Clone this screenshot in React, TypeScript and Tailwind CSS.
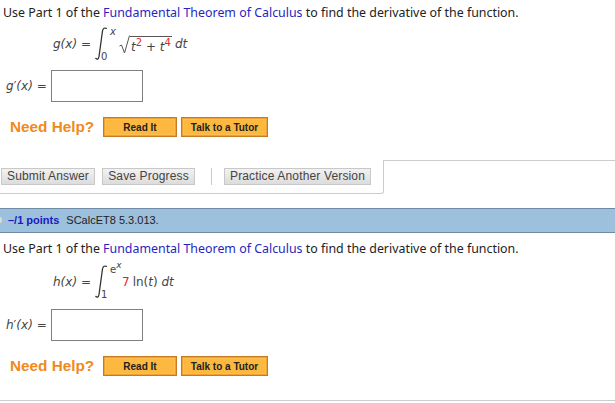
const Integral = () => (
  <svg width="16" height="34" viewBox="0 0 16 34" className="shrink-0" fill="none">
    <path d="M0.5 31 C2 33 3.5 32.5 4 29.5 L7.5 4 C8 1 9.5 0.5 12 1.5" stroke="#333" strokeWidth="1.3" />
  </svg>
);

const Sqrt = () => (
  <svg width="11" height="19" viewBox="0 0 11 19" className="shrink-0" fill="none">
    <path d="M0.5 11 L2.5 10 L5.5 18 L10.5 0.5" stroke="#555" strokeWidth="1" />
  </svg>
);

const Prompt = () => (
  <p className="text-[12.4px] leading-[16px] text-[#222]">
    Use Part 1 of the <span className="text-[#2a1fc0]">Fundamental Theorem of Calculus</span> to find the derivative of the function.
  </p>
);

const Help = () => (
  <div className="flex items-center pl-[10px]">
    <span className="w-[93px] text-[15.3px] font-bold text-[#f08a1d] font-['Liberation_Sans',sans-serif]">Need Help?</span>
    <button className="flex h-[20px] w-[74px] items-center justify-center border border-[#c77a20] bg-[#fdb93f] shadow-[inset_0_0_0_1px_#f0a030,inset_0_0_0_2px_#fdc050] text-[10px] font-bold text-[#222] font-['Liberation_Sans',sans-serif]">
      Read It
    </button>
    <button className="ml-[4px] flex h-[20px] w-[87px] items-center justify-center border border-[#c77a20] bg-[#fdb93f] shadow-[inset_0_0_0_1px_#f0a030,inset_0_0_0_2px_#fdc050] text-[10px] font-bold text-[#222] font-['Liberation_Sans',sans-serif]">
      Talk to a Tutor
    </button>
  </div>
);

const Answer = ({ label }: { label: string }) => (
  <div className="flex items-center pl-[6px]">
    <span className="w-[45px] text-[12px] text-[#444] font-['DejaVu_Sans',sans-serif]"><i>{label}</i>′<i>(x)</i> =</span>
    <div className="h-[32px] w-[92px] border border-[#808080] bg-white" />
  </div>
);

const GrayButton = ({ children, className }: { children: string; className?: string }) => (
  <button className={`h-[17px] border border-[#c8c8c8] bg-gradient-to-b from-[#f2f2f2] to-[#dcdcdc] text-[12px] leading-[15px] text-[#444] font-['Liberation_Sans',sans-serif] tracking-[0.15px] ${className}`}>
    {children}
  </button>
);

export default function App() {
  return (
    <div className="h-[403px] w-[615px] overflow-hidden bg-white font-['Noto_Sans',sans-serif]">
      <div className="pl-[3px] pt-[5px]"><Prompt /></div>

      <div className="mt-[3px] flex h-[40px] items-center pl-[53px] text-[12px] text-[#444] font-['DejaVu_Sans',sans-serif]">
        <span className="w-[42px]"><i>g(x)</i> =</span>
        <div className="relative h-[34px] w-[24px]">
          <Integral />
          <span className="absolute left-[15px] top-[-1px] text-[10px] italic leading-[12px]">x</span>
          <span className="absolute bottom-[-2px] left-[6px] text-[10px] leading-[12px]">0</span>
        </div>
        <Sqrt />
        <span className="mt-[2px] border-t border-[#555] px-[1px] pt-[3px] leading-[15px] whitespace-nowrap">
          <i>t</i><sup className="text-[10px] text-[#f0202a]">2</sup> + <i>t</i><sup className="text-[10px] text-[#f0202a]">4</sup>
        </span>
        <span className="ml-[3px] italic">dt</span>
      </div>

      <div className="mt-[6px]"><Answer label="g" /></div>
      <div className="mt-[14px]"><Help /></div>

      <div className="mt-[21px] flex h-[34px]">
        <div className="flex h-full w-[384px] items-start rounded-br-[3px] border-r border-b border-[#ccc] pl-[1px] pt-[8px]">
          <GrayButton className="w-[94px]">Submit Answer</GrayButton>
          <GrayButton className="ml-[7px] w-[93px]">Save Progress</GrayButton>
          <div className="ml-[16px] h-[17px] w-px bg-[#ccc]" />
          <GrayButton className="ml-[12px] w-[147px]">Practice Another Version</GrayButton>
        </div>
        <div className="flex-1 border-t border-[#ccc]" />
      </div>

      <div className="mt-[14px] flex h-[25px] items-center border-y border-[#6f8aa5] bg-[#9dc0dd] font-['Liberation_Sans',sans-serif] text-[11px]">
        <span className="h-[6px] w-[2px] rounded-r-full bg-[#d8d8d8]" />
        <span className="ml-[6px] font-bold text-[#1a1ac0]">–/1 points</span>
        <span className="ml-[7px] text-[#222]">SCalcET8 5.3.013.</span>
      </div>

      <div className="pl-[3px] pt-[8px]"><Prompt /></div>

      <div className="mt-[5px] flex h-[40px] items-center pl-[53px] text-[12px] text-[#444] font-['DejaVu_Sans',sans-serif]">
        <span className="w-[42px]"><i>h(x)</i> =</span>
        <div className="relative h-[34px] w-[24px]">
          <Integral />
          <span className="absolute left-[15px] top-[-1px] text-[10px] leading-[12px]">e<sup className="text-[9px] italic">x</sup></span>
          <span className="absolute bottom-[-2px] left-[6px] text-[10px] leading-[12px]">1</span>
        </div>
        <span className="ml-[3px] text-[#f0202a]">7</span>
        <span className="ml-[3px]">ln(<i>t</i>) <i>dt</i></span>
      </div>

      <div className="mt-[7px]"><Answer label="h" /></div>
      <div className="mt-[14px]"><Help /></div>
      <div className="mt-[22px] border-b border-[#ccc]" />
    </div>
  );
}
